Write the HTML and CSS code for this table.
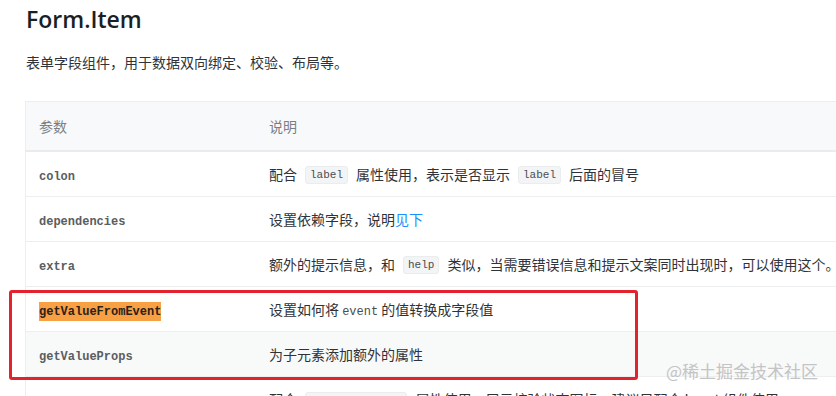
FILE: index.html
```html
<!DOCTYPE html>
<html lang="zh">
<head>
<meta charset="utf-8">
<link rel="stylesheet" href="styles.css">
</head>
<body>
<div class="page">
  <h1 class="title">Form.Item</h1>
  <p class="desc">表单字段组件，用于数据双向绑定、校验、布局等。</p>
  <table class="api">
    <thead>
      <tr><th class="c1">参数</th><th>说明</th></tr>
    </thead>
    <tbody>
      <tr><td class="c1"><span class="prop">colon</span></td><td>配合<code>label</code>属性使用，表示是否显示<code>label</code>后面的冒号</td></tr>
      <tr><td class="c1"><span class="prop">dependencies</span></td><td>设置依赖字段，说明<a class="link">见下</a></td></tr>
      <tr><td class="c1"><span class="prop">extra</span></td><td>额外的提示信息，和<code>help</code>类似，当需要错误信息和提示文案同时出现时，可以使用这个。</td></tr>
      <tr><td class="c1"><span class="prop mark">getValueFromEvent</span></td><td>设置如何将 <span class="plain">event</span> 的值转换成字段值</td></tr>
      <tr class="hover"><td class="c1"><span class="prop">getValueProps</span></td><td>为子元素添加额外的属性</td></tr>
      <tr><td class="c1"><span class="prop">hasFeedback</span></td><td>配合<code>validateStatus</code>属性使用，展示校验状态图标，建议只配合 Input 组件使用</td></tr>
    </tbody>
  </table>
</div>
<div class="annot"></div>
<div class="watermark">@稀土掘金技术社区</div>
</body>
</html>
```
FILE: styles.css
```css
html, body {
  margin: 0;
  padding: 0;
  overflow: hidden;
  background: #fff;
}
body {
  width: 836px;
  height: 396px;
  position: relative;
  font-family: "Noto Sans CJK SC", "Liberation Sans", sans-serif;
  color: #333;
}
.page {
  padding-left: 25px;
}
.title {
  margin: 3px 0 0 1px;
  font-family: "Open Sans", "Liberation Sans", sans-serif;
  font-size: 23px;
  font-weight: 600;
  line-height: 32px;
  color: #1a1f24;
}
.desc {
  margin: 16px 0 0 1px;
  font-size: 14px;
  line-height: 22px;
  color: #2f3338;
}
.api {
  margin-top: 28px;
  width: 880px;
  border-collapse: collapse;
  border-top: 1px solid #eceef0;
  border-left: 1px solid #eceef0;
  white-space: nowrap;
  font-size: 14px;
}
.api th {
  text-align: left;
  font-weight: normal;
  color: #7a7f85;
  background: #f8f9fa;
  padding: 13px 13px;
  line-height: 22px;
  border-bottom: 2px solid #e9ebed;
}
.api td {
  padding: 12px 13px;
  height: 20px;
  line-height: 20px;
  border-bottom: 1px solid #eceef0;
  color: #2f3338;
  vertical-align: middle;
}
.api .c1 {
  width: 204px;
}
.api tr.hover td {
  background: #f8f9f9;
}
.prop {
  font-family: "Liberation Mono", monospace;
  font-size: 12px;
  line-height: 12px;
  font-weight: bold;
  color: #5a5d61;
}
.prop.mark {
  background: #f8a044;
  color: #2b2118;
  padding: 3px 0 2px;
}
code {
  display: inline-block;
  vertical-align: middle;
  margin: -2px 8px 0;
  padding: 0 4px;
  font-family: "Liberation Mono", monospace;
  font-size: 11px;
  line-height: 16px;
  color: #4a4d52;
  background: #f2f4f5;
  border: 1px solid #eaeced;
  border-radius: 3px;
}
.plain {
  font-family: "Liberation Mono", monospace;
  font-size: 12px;
  line-height: 12px;
  color: #4a4d52;
}
.link {
  color: #1890ff;
}
.annot {
  position: absolute;
  left: 9px;
  top: 290px;
  width: 629px;
  height: 90px;
  box-sizing: border-box;
  border: 3px solid #e2232e;
  border-radius: 3px;
}
.watermark {
  position: absolute;
  left: 666px;
  top: 360px;
  font-size: 17px;
  line-height: 22px;
  color: #c4c4c4;
}
```
